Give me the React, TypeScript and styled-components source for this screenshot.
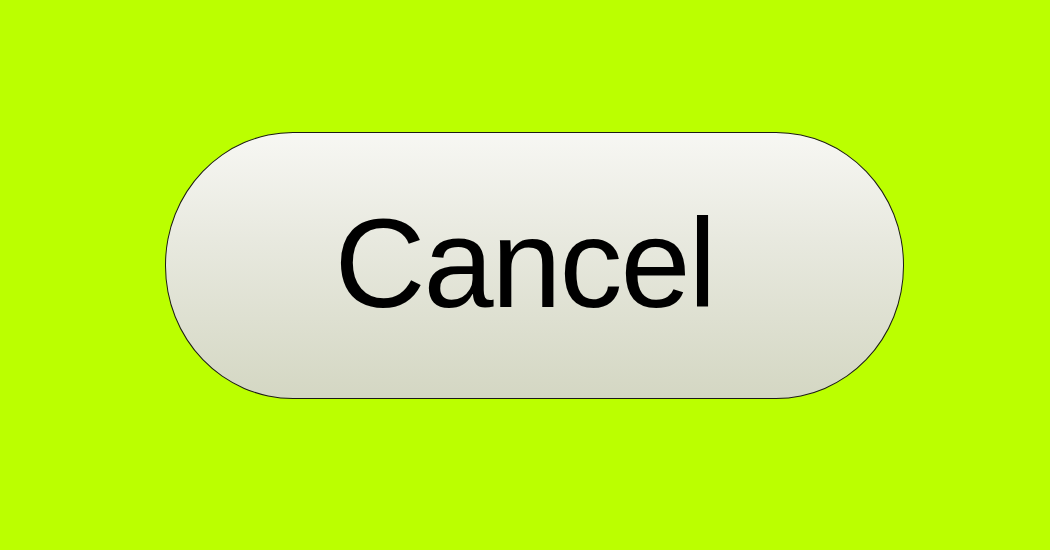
import styled, { createGlobalStyle } from "styled-components";

const GlobalStyle = createGlobalStyle`
  html, body {
    margin: 0;
    padding: 0;
    background: #bbff00;
  }
`;

const Page = styled.main`
  width: 1050px;
  height: 550px;
  box-sizing: border-box;
  padding: 132px 0 0 165px;
  background: #bbff00;
  display: flex;
  align-items: flex-start;
`;

const PillButton = styled.button`
  width: 739px;
  height: 267px;
  box-sizing: border-box;
  border: 1.5px solid #1c1c14;
  border-radius: 128px / 133px;
  background: linear-gradient(180deg, #f7f7f3 0%, #e8e9df 40%, #d4d7c3 100%);
  display: flex;
  align-items: center;
  justify-content: center;
  padding: 0 20px 4px 0;
  cursor: pointer;
  font-family: "Liberation Sans", Arial, sans-serif;
  font-size: 126px;
  letter-spacing: -2px;
  color: #000;
  line-height: 1;
`;

const App = () => {
  return (
    <>
      <GlobalStyle />
      <Page>
        <PillButton type="button">Cancel</PillButton>
      </Page>
    </>
  );
};

export default App;
